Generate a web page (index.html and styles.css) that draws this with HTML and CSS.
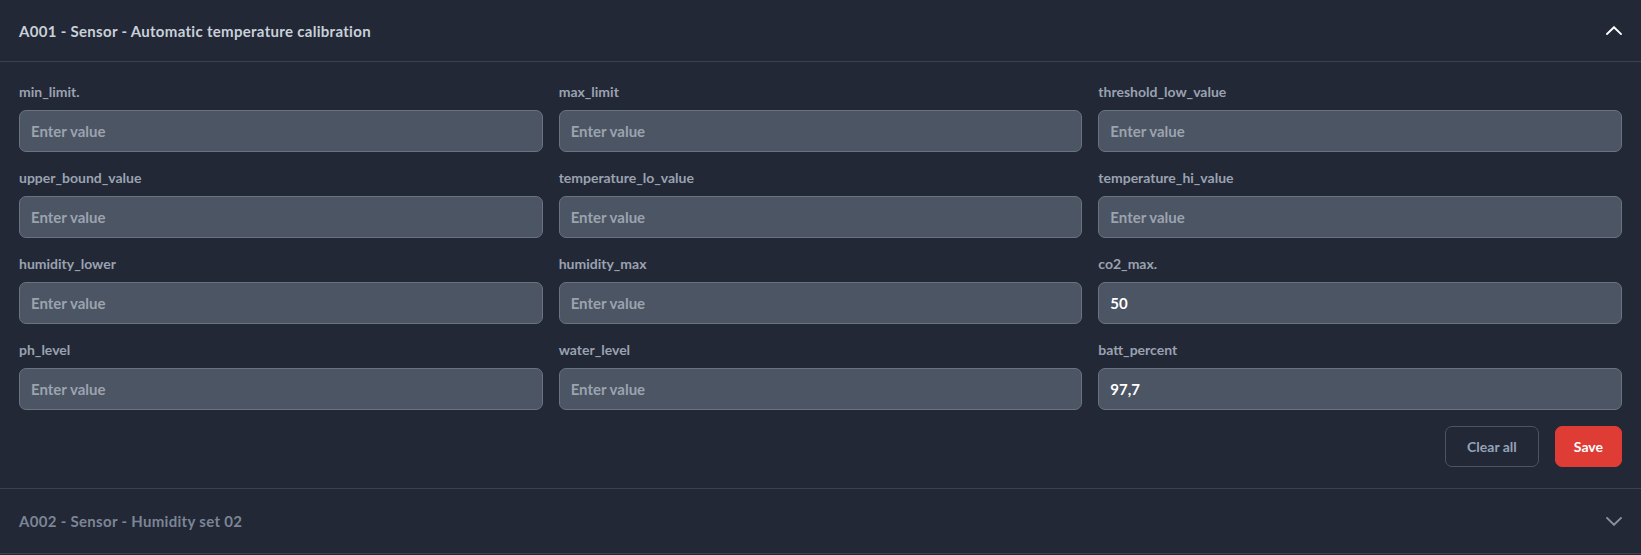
FILE: index.html
```html
<!DOCTYPE html>
<html lang="en">
<head>
<meta charset="utf-8">
<title>Settings</title>
<link rel="stylesheet" href="styles.css">
</head>
<body>
<div class="accordion">
  <section class="item item-open">
    <div class="item-header">
      <span class="item-title">A001 - Sensor - Automatic temperature calibration</span>
      <svg class="chevron chevron-up" width="16" height="9" viewBox="0 0 16 9" aria-hidden="true"><polyline points="1,8 8,1.2 15,8" fill="none" stroke="currentColor" stroke-width="1.9" stroke-linecap="square"/></svg>
    </div>
    <div class="item-body">
      <div class="field-grid">
        <label class="field"><span class="field-label">min_limit.</span><input class="field-input" placeholder="Enter value"></label>
        <label class="field"><span class="field-label">max_limit</span><input class="field-input" placeholder="Enter value"></label>
        <label class="field"><span class="field-label">threshold_low_value</span><input class="field-input" placeholder="Enter value"></label>
        <label class="field"><span class="field-label">upper_bound_value</span><input class="field-input" placeholder="Enter value"></label>
        <label class="field"><span class="field-label">temperature_lo_value</span><input class="field-input" placeholder="Enter value"></label>
        <label class="field"><span class="field-label">temperature_hi_value</span><input class="field-input" placeholder="Enter value"></label>
        <label class="field"><span class="field-label">humidity_lower</span><input class="field-input" placeholder="Enter value"></label>
        <label class="field"><span class="field-label">humidity_max</span><input class="field-input" placeholder="Enter value"></label>
        <label class="field"><span class="field-label">co2_max.</span><input class="field-input" placeholder="Enter value" value="50"></label>
        <label class="field"><span class="field-label">ph_level</span><input class="field-input" placeholder="Enter value"></label>
        <label class="field"><span class="field-label">water_level</span><input class="field-input" placeholder="Enter value"></label>
        <label class="field"><span class="field-label">batt_percent</span><input class="field-input" placeholder="Enter value" value="97,7"></label>
      </div>
      <div class="actions">
        <button class="btn btn-outline" type="button">Clear all</button>
        <button class="btn btn-primary" type="button">Save</button>
      </div>
    </div>
  </section>
  <section class="item item-closed">
    <div class="item-header">
      <span class="item-title">A002 - Sensor - Humidity set 02</span>
      <svg class="chevron chevron-down" width="16" height="9" viewBox="0 0 16 9" aria-hidden="true"><polyline points="1,1 8,7.8 15,1" fill="none" stroke="currentColor" stroke-width="1.9" stroke-linecap="square"/></svg>
    </div>
  </section>
</div>
</body>
</html>
```

FILE: styles.css
```css
* { box-sizing: border-box; }

html, body {
  margin: 0;
  padding: 0;
  background: #222835;
  font-family: Lato, "Noto Sans", "Open Sans", sans-serif;
  color: #d1d5db;
  height: 100%;
}

.accordion {
  display: flex;
  flex-direction: column;
}

.item {
  border-bottom: 1px solid #3a4150;
}

.item-header {
  display: flex;
  align-items: center;
  justify-content: space-between;
  height: 62px;
  padding: 0 19px 0 19px;
  border-bottom: 1px solid #3a4150;
}

.item-closed .item-header {
  height: 64px;
  border-bottom: none;
}

.item-title {
  font-size: 15px;
  font-weight: 700;
  color: #c9d0da;
  letter-spacing: 0.3px;
}

.item-closed .item-title {
  color: #7c8595;
}

.chevron-up { color: #ffffff; }
.chevron-down { color: #8a919d; }

.item-body {
  padding: 20px 19px 21px 19px;
}

.field-grid {
  display: grid;
  grid-template-columns: repeat(3, 1fr);
  column-gap: 16px;
  row-gap: 16px;
}

.field {
  display: flex;
  flex-direction: column;
  gap: 8px;
}

.field-label {
  font-size: 14px;
  line-height: 20px;
  font-weight: 700;
  color: #9aa2b1;
}

.field-input {
  height: 42px;
  width: 100%;
  padding: 0 11px;
  border: 1px solid #6b7280;
  border-radius: 7px;
  background: #4b5563;
  color: #ffffff;
  font-family: inherit;
  font-size: 15px;
  font-weight: 700;
  outline: none;
}

.field-input::placeholder {
  color: #9ca3af;
  font-weight: 700;
}

.actions {
  display: flex;
  justify-content: flex-end;
  gap: 16px;
  margin-top: 16px;
}

.btn {
  height: 41px;
  padding: 0 19px;
  border-radius: 7px;
  font-family: inherit;
  font-size: 14px;
  font-weight: 700;
  cursor: pointer;
}

.btn-outline {
  background: transparent;
  border: 1px solid #4b5563;
  color: #94a3b8;
  padding: 0 21px;
}

.btn-primary {
  background: #e03c36;
  border: 1px solid #e03c36;
  color: #ffffff;
  padding: 0 18px;
}
```
